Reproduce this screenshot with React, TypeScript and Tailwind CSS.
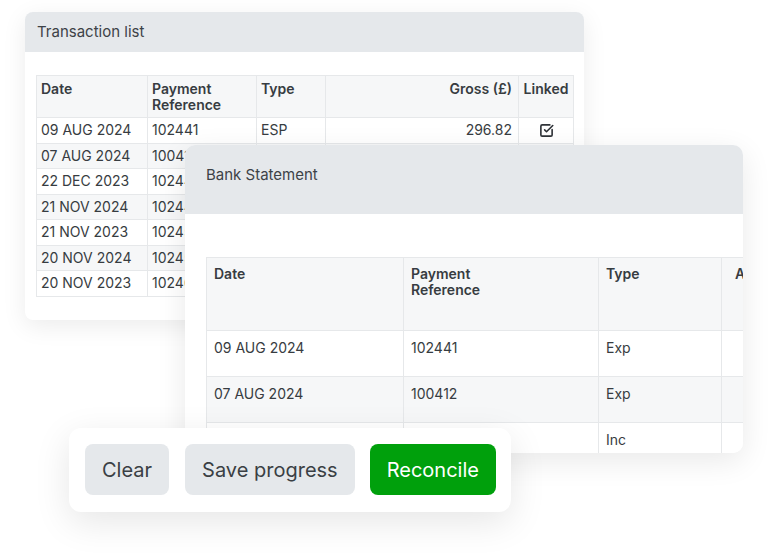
import { SquareCheckBig } from 'lucide-react'

const txRows = [
  { date: '09 AUG 2024', ref: '102441', type: 'ESP', gross: '296.82', linked: true },
  { date: '07 AUG 2024', ref: '100412', type: 'Exp', gross: '120.00', linked: true },
  { date: '22 DEC 2023', ref: '102443', type: 'Inc', gross: '84.50', linked: false },
  { date: '21 NOV 2024', ref: '102448', type: 'Inc', gross: '410.00', linked: false },
  { date: '21 NOV 2023', ref: '102451', type: 'Exp', gross: '62.10', linked: false },
  { date: '20 NOV 2024', ref: '102453', type: 'Inc', gross: '150.00', linked: false },
  { date: '20 NOV 2023', ref: '102460', type: 'Exp', gross: '38.75', linked: false },
]

const bankRows = [
  { date: '09 AUG 2024', ref: '102441', type: 'Exp', amount: '296.82' },
  { date: '07 AUG 2024', ref: '100412', type: 'Exp', amount: '120.00' },
  { date: '05 AUG 2024', ref: '102443', type: 'Inc', amount: '84.50' },
]

function TransactionList() {
  return (
    <div className="absolute left-[25px] top-[12px] w-[559px] h-[308px] bg-white rounded-lg shadow-[0_6px_24px_rgba(0,0,0,0.08)] overflow-hidden">
      <div className="h-[40px] bg-[#e5e8eb] px-3 flex items-center text-[15px] text-[#3d4247]">
        Transaction list
      </div>
      <div className="px-[11px] pt-[23px]">
        <table className="border-collapse table-fixed w-[537px] text-[14px] text-[#373c41]">
          <colgroup>
            <col className="w-[111px]" />
            <col className="w-[109px]" />
            <col className="w-[69px]" />
            <col className="w-[193px]" />
            <col className="w-[55px]" />
          </colgroup>
          <thead>
            <tr className="h-[42px] bg-[#f6f7f8]">
              <th className="border border-[#e6e8ea] px-[4px] pt-[5px] align-top text-left font-semibold leading-4">Date</th>
              <th className="border border-[#e6e8ea] px-[4px] pt-[5px] align-top text-left font-semibold leading-4">
                Payment
                <br />
                Reference
              </th>
              <th className="border border-[#e6e8ea] px-[4px] pt-[5px] align-top text-left font-semibold leading-4">Type</th>
              <th className="border border-[#e6e8ea] px-[6px] pt-[5px] align-top text-right font-semibold leading-4">Gross (£)</th>
              <th className="border border-[#e6e8ea] px-[4px] pt-[5px] align-top text-center font-semibold leading-4">Linked</th>
            </tr>
          </thead>
          <tbody>
            {txRows.map((row, i) => (
              <tr key={row.date + i} className={i % 2 === 1 ? 'h-[25.5px] bg-[#f6f7f8]' : 'h-[25.5px] bg-white'}>
                <td className="border border-[#e6e8ea] px-[4px] leading-5 whitespace-nowrap">{row.date}</td>
                <td className="border border-[#e6e8ea] px-[4px] leading-5">{row.ref}</td>
                <td className="border border-[#e6e8ea] px-[4px] leading-5">{row.type}</td>
                <td className="border border-[#e6e8ea] px-[6px] leading-5 text-right">{row.gross}</td>
                <td className="border border-[#e6e8ea] px-[4px] leading-5">
                  {row.linked && (
                    <div className="flex justify-center">
                      <SquareCheckBig className="w-[15px] h-[15px] text-[#2f3338]" strokeWidth={2.6} />
                    </div>
                  )}
                </td>
              </tr>
            ))}
          </tbody>
        </table>
      </div>
    </div>
  )
}

function BankStatement() {
  return (
    <div className="absolute left-[185px] top-[145px] w-[558px] h-[308px] bg-white rounded-[10px] shadow-[0_8px_30px_rgba(0,0,0,0.09)] overflow-hidden">
      <div className="h-[69px] bg-[#e5e8eb] px-[21px] pt-[19px] text-[15px] text-[#3d4247]">
        Bank Statement
      </div>
      <div className="pl-[21px] pt-[43px]">
        <table className="border-collapse table-fixed w-[700px] text-[14px] text-[#373c41]">
          <colgroup>
            <col className="w-[197px]" />
            <col className="w-[195px]" />
            <col className="w-[123px]" />
            <col className="w-[185px]" />
          </colgroup>
          <thead>
            <tr className="h-[73px] bg-[#f6f7f8]">
              <th className="border border-[#e6e8ea] px-[7px] pt-[8px] align-top text-left font-semibold leading-4">Date</th>
              <th className="border border-[#e6e8ea] px-[7px] pt-[8px] align-top text-left font-semibold leading-4">
                Payment
                <br />
                Reference
              </th>
              <th className="border border-[#e6e8ea] px-[7px] pt-[8px] align-top text-left font-semibold leading-4">Type</th>
              <th className="border border-[#e6e8ea] px-[13px] pt-[8px] align-top text-left font-semibold leading-4">Amount</th>
            </tr>
          </thead>
          <tbody>
            {bankRows.map((row, i) => (
              <tr key={row.date} className={i % 2 === 1 ? 'h-[46px] bg-[#f6f7f8]' : 'h-[46px] bg-white'}>
                <td className="border border-[#e6e8ea] px-[7px] pt-[7px] align-top leading-5">{row.date}</td>
                <td className="border border-[#e6e8ea] px-[7px] pt-[7px] align-top leading-5">{row.ref}</td>
                <td className="border border-[#e6e8ea] px-[7px] pt-[7px] align-top leading-5">{row.type}</td>
                <td className="border border-[#e6e8ea] px-[13px] pt-[7px] align-top leading-5 text-right">{row.amount}</td>
              </tr>
            ))}
          </tbody>
        </table>
      </div>
    </div>
  )
}

function ActionBar() {
  return (
    <div className="absolute left-[69px] top-[428px] bg-white rounded-xl shadow-[0_10px_36px_rgba(0,0,0,0.10)] pl-[16px] pr-[15px] pt-[16px] pb-[17px] flex items-center">
      <button className="h-[51px] px-[17px] rounded-lg bg-[#e5e8eb] text-[20px] text-[#3a3f44]">Clear</button>
      <button className="ml-[16px] h-[51px] px-[17px] rounded-lg bg-[#e5e8eb] text-[20px] text-[#3a3f44]">Save progress</button>
      <button className="ml-[15px] h-[51px] px-[17px] rounded-lg bg-[#00a00c] text-[20px] text-white">Reconcile</button>
    </div>
  )
}

export default function App() {
  return (
    <div className="relative w-[768px] h-[559px] bg-white overflow-hidden font-['Inter','Liberation_Sans',sans-serif]">
      <TransactionList />
      <BankStatement />
      <ActionBar />
    </div>
  )
}
